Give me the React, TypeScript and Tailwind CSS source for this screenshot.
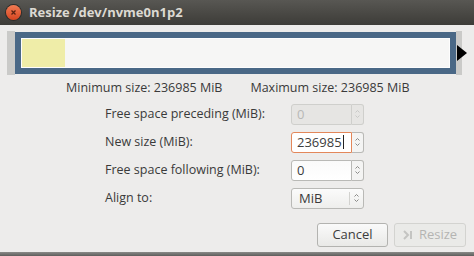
import React from 'react'

const font = { fontFamily: '"Open Sans", "DejaVu Sans", sans-serif' }

function Arrows({ dim = false }: { dim?: boolean }) {
  const c = dim ? '#c9c9c7' : '#8a8a88'
  return (
    <svg width="7" height="12" viewBox="0 0 7 12">
      <path d="M1.5 4.5 L3.5 2.5 L5.5 4.5" fill="none" stroke={c} strokeWidth="1" />
      <path d="M1.5 7.5 L3.5 9.5 L5.5 7.5" fill="none" stroke={c} strokeWidth="1" />
    </svg>
  )
}

function Spin({ value, disabled = false, focused = false }: { value: string; disabled?: boolean; focused?: boolean }) {
  return (
    <div className="flex h-[21px] w-[73px]">
      <div
        className={`flex flex-1 items-center rounded-l-[3px] border px-[5px] text-[13px] ${
          disabled
            ? 'border-[#cfcfcc] bg-[#e6e5e3] text-[#b8b8b6]'
            : focused
              ? 'border-[#e3875a] bg-white text-[#3c3c3c]'
              : 'border-[#b9b9b6] bg-gradient-to-b from-[#fafafa] to-white text-[#3c3c3c]'
        }`}
      >
        {value}
        {focused && <span className="ml-[1px] h-[14px] w-px bg-[#222]" />}
      </div>
      <div
        className={`flex w-[12px] items-center justify-center rounded-r-[3px] border border-l-0 ${
          disabled ? 'border-[#cfcfcc] bg-[#e6e5e3]' : 'border-[#b9b9b6] bg-[#f4f4f3]'
        }`}
      >
        <Arrows dim={disabled} />
      </div>
    </div>
  )
}

export default function App() {
  return (
    <div className="flex h-[256px] w-[474px] flex-col overflow-hidden bg-[#3a3a38] text-[#3a3a3a]" style={font}>
      {/* title bar */}
      <div className="flex h-[25px] items-center bg-gradient-to-b from-[#585753] to-[#3d3c38] pl-[6px]">
        <div className="flex h-[15px] w-[15px] items-center justify-center rounded-full bg-gradient-to-b from-[#f27b52] to-[#d6441f] shadow-[0_0_0_1px_#2e2d2a]">
          <svg width="7" height="7" viewBox="0 0 7 7">
            <path d="M1.5 1.5 L5.5 5.5 M5.5 1.5 L1.5 5.5" stroke="#5a2212" strokeWidth="1.3" />
          </svg>
        </div>
        <span className="ml-[8px] text-[13px] font-bold text-[#dcd9d2]">Resize /dev/nvme0n1p2</span>
      </div>

      {/* body */}
      <div className="flex h-[227px] flex-col bg-[#edeceb]">
        {/* partition graph */}
        <div className="mt-[6px] flex items-center pl-[7px]">
          <div className="h-[44px] w-[8px] bg-[#cacac8]" />
          <div className="h-[42px] w-[441px] bg-[#4a6886] p-[6px]">
            <div className="flex h-full w-full bg-[#f6f6f5] shadow-[inset_0_0_0_1px_#fdfdfd]">
              <div className="my-px ml-px w-[43px] bg-[#efeda8]" />
            </div>
          </div>
          <div className="relative h-[44px] w-[6px] bg-[#cacac8]">
            <svg className="absolute left-[1px] top-[14px]" width="10" height="16" viewBox="0 0 10 16">
              <path d="M0 0 L10 8 L0 16 Z" fill="#000" />
            </svg>
          </div>
        </div>

        {/* sizes */}
        <div className="mt-[4px] flex text-[12.5px]">
          <span className="ml-[66px]">Minimum size: 236985 MiB</span>
          <span className="ml-[28px]">Maximum size: 236985 MiB</span>
        </div>

        {/* form */}
        <div className="mt-[6px] grid grid-cols-[186px_73px] items-center gap-y-[7px] pl-[105px] text-[12.5px]">
          <span>Free space preceding (MiB):</span>
          <Spin value="0" disabled />
          <span>New size (MiB):</span>
          <Spin value="236985" focused />
          <span>Free space following (MiB):</span>
          <Spin value="0" />
          <span>Align to:</span>
          <div className="flex h-[21px] w-[73px] items-center rounded-[3px] border border-[#b9b9b6] bg-gradient-to-b from-[#fbfbfb] to-[#eeeeec] pl-[7px] text-[13px]">
            <span className="flex-1">MiB</span>
            <div className="flex h-[13px] w-[14px] items-center justify-center border-l border-[#d2d2cf]">
              <Arrows />
            </div>
          </div>
        </div>

        {/* buttons */}
        <div className="mt-[14px] flex justify-end gap-[6px] pr-[8px] text-[13px]">
          <button className="h-[24px] w-[71px] rounded-[3px] border border-[#b3b3b0] bg-gradient-to-b from-[#fafafa] to-[#e9e9e7] text-[#3c3c3c]">
            Cancel
          </button>
          <button className="flex h-[24px] w-[72px] items-center justify-center gap-[6px] rounded-[3px] border border-[#d3d3d0] bg-[#eaeae8] text-[#b4b4b2]">
            <svg width="10" height="10" viewBox="0 0 10 10">
              <path d="M1 1 L5 5 L1 9" fill="none" stroke="#c4c4c2" strokeWidth="2" />
              <path d="M8 1 V9" stroke="#c4c4c2" strokeWidth="2" />
            </svg>
            Resize
          </button>
        </div>
      </div>
      <div className="h-[4px] bg-gradient-to-b from-[#8a8a88] to-[#5e5e5c]" />
    </div>
  )
}
